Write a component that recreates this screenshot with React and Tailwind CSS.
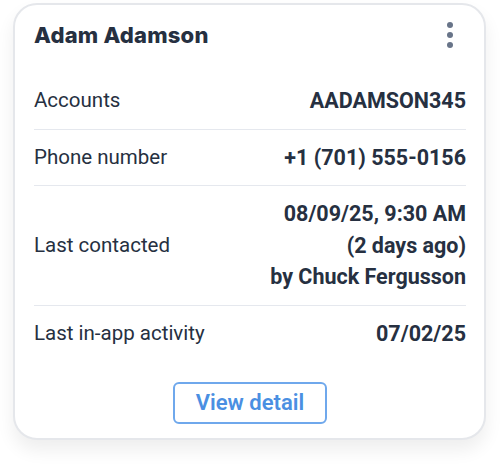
export default function App() {
  const rows = [
    { label: "Accounts", values: ["AADAMSON345"] },
    { label: "Phone number", values: ["+1 (701) 555-0156"] },
    { label: "Last contacted", values: ["08/09/25, 9:30 AM", "(2 days ago)", "by Chuck Fergusson"] },
    { label: "Last in-app activity", values: ["07/02/25"] },
  ];
  return (
    <div className="w-[500px] h-[468px] bg-white pt-[3px] pl-[13px]" style={{ fontFamily: "Roboto, sans-serif" }}>
      <div className="w-[473px] h-[437px] rounded-[24px] border-2 border-[#e5e7eb] bg-white shadow-[0_10px_18px_rgba(0,0,0,0.07)] flex flex-col pl-[19px] pr-[18px]">
        <div className="h-[68px] pt-[16px]">
          <div className="h-[28px] flex items-center justify-between">
            <div className="text-[22px] leading-[28px] font-extrabold tracking-[0.2px] text-[#263041]" style={{ fontFamily: "Inter, sans-serif" }}>
              Adam Adamson
            </div>
            <div className="flex flex-col gap-[4px] mr-[13px]">
              <span className="w-[6px] h-[6px] rounded-full bg-[#687489]" />
              <span className="w-[6px] h-[6px] rounded-full bg-[#687489]" />
              <span className="w-[6px] h-[6px] rounded-full bg-[#687489]" />
            </div>
          </div>
        </div>
        <div className="flex flex-col">
          {rows.map((r, i) => (
            <div
              key={r.label}
              className={`flex items-center justify-between py-[12px] ${i < rows.length - 1 ? "border-b-[1.5px] border-[#e5e8ee]" : ""}`}
            >
              <div className="text-[20.5px] leading-[31.5px] text-[#263041]">{r.label}</div>
              <div className="flex flex-col items-end">
                {r.values.map((v) => (
                  <div key={v} className="text-[21.5px] leading-[31.5px] font-bold text-[#263041]">{v}</div>
                ))}
              </div>
            </div>
          ))}
        </div>
        <div className="flex justify-center mt-[21px]">
          <button className="w-[154px] h-[42px] rounded-[6px] border-2 border-[#6fa8ec] text-[#4a8fe2] text-[22px] leading-[28px] font-semibold">
            View detail
          </button>
        </div>
      </div>
    </div>
  );
}
